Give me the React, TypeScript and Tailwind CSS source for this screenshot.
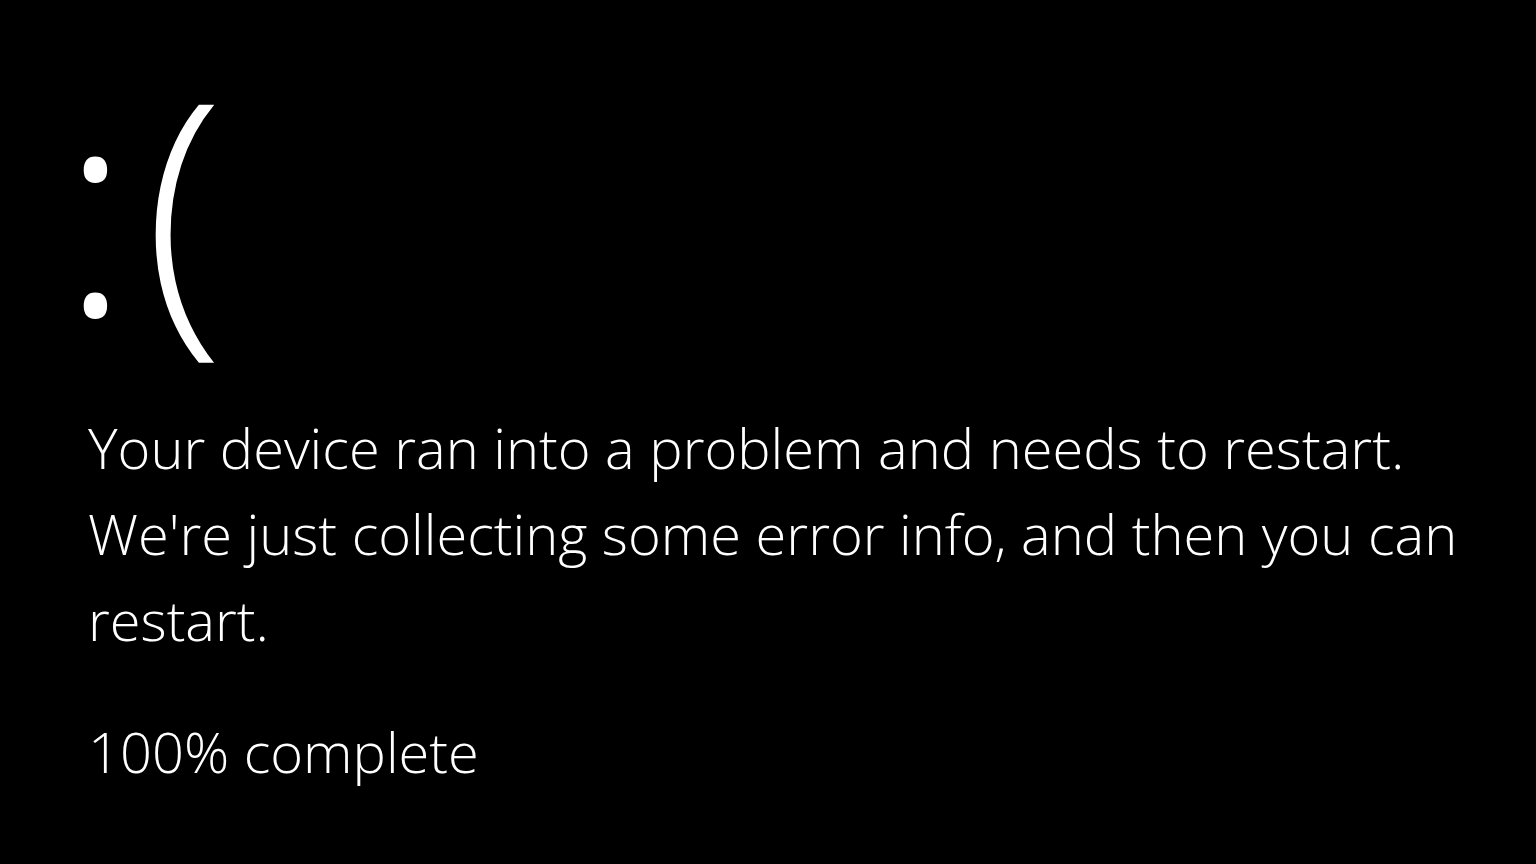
export default function App() {
  return (
    <div className="h-[864px] w-[1536px] overflow-hidden bg-black pl-[88px] text-white" style={{ fontFamily: '"Open Sans", "Noto Sans", sans-serif' }}>
      <div className="-ml-[28px] text-[296px] font-light leading-[404px]">
        <span className="mr-[13px]">:</span>(
      </div>
      <div className="whitespace-nowrap text-[56px] font-light leading-[86px]">
        Your device ran into a problem and needs to restart.
        <br />
        We're just collecting some error info, and then you can
        <br />
        restart.
      </div>
      <div className="mt-[46px] text-[56px] font-light leading-[86px]">100% complete</div>
    </div>
  );
}
